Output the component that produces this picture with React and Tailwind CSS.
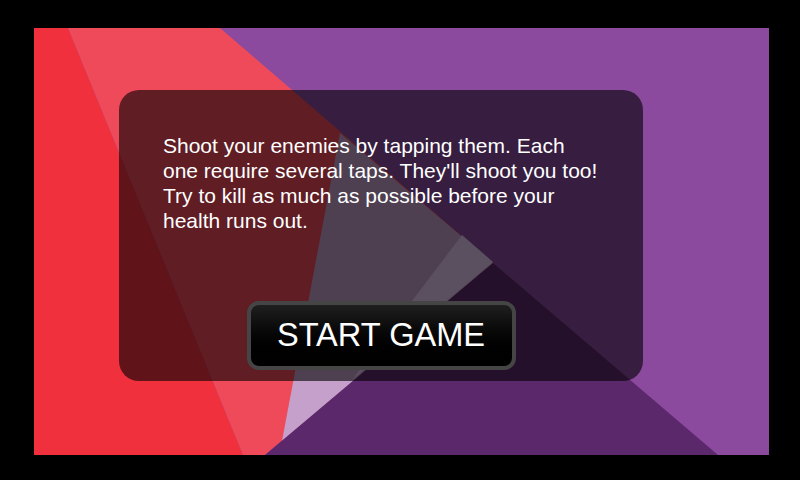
import React from "react";

const shapes = [
  { fill: "#f0313d", points: "0,0 34,0 209,427 0,427" },
  { fill: "#ef4a5a", points: "34,0 186,0 459,235 231,427 209,427" },
  { fill: "#c4a0ca", points: "306,105 459,235 248,413" },
  { fill: "#e1c8f0", points: "428,207 459,234 318,352" },
  { fill: "#5b286b", points: "459,235 684,427 231,427" },
];

function Backdrop() {
  return (
    <svg className="absolute inset-0" width="735" height="427" viewBox="0 0 735 427">
      <rect width="735" height="427" fill="#8b4a9e" />
      {shapes.map((s, i) => (
        <polygon key={i} points={s.points} fill={s.fill} />
      ))}
    </svg>
  );
}

export default function App() {
  return (
    <div className="h-[480px] w-[800px] bg-black pl-[34px] pt-[28px] font-['Liberation_Sans',Arial,sans-serif]">
      <div className="relative h-[427px] w-[735px] overflow-hidden pl-[85px] pt-[62px]">
        <Backdrop />
        <div className="relative flex h-[291px] w-[524px] flex-col rounded-[20px] bg-black/60 px-[44px] pt-[43px]">
          <p className="text-[21px] leading-[25px] text-white">
            Shoot your enemies by tapping them. Each one require several taps. They'll shoot you too! Try to kill as
            much as possible before your health runs out.
          </p>
          <button className="mb-[11px] mt-auto flex h-[69px] w-[269px] items-center justify-center self-center rounded-[12px] border-4 border-[#454545] bg-gradient-to-b from-[#1f1f1f] to-black text-[32.6px] leading-none text-white">
            START GAME
          </button>
        </div>
      </div>
    </div>
  );
}
